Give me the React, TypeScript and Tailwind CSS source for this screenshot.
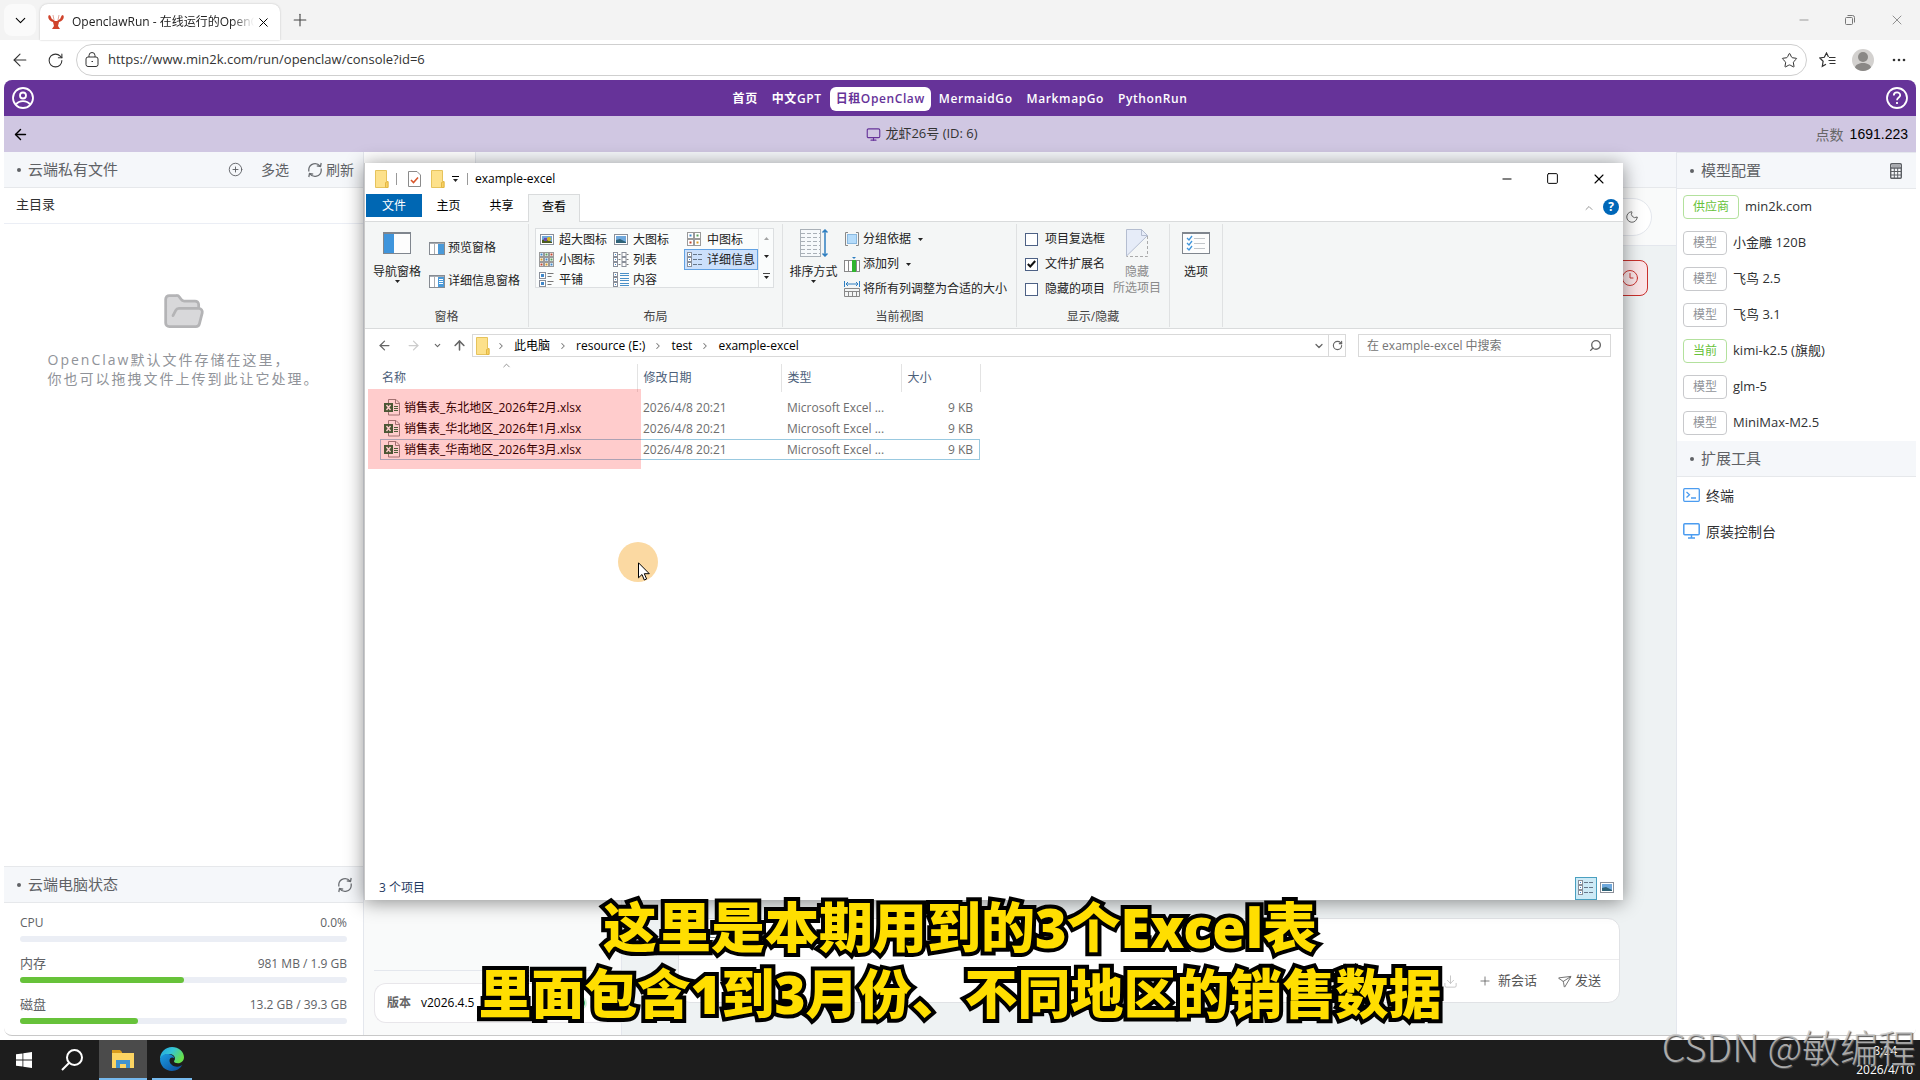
import type { ReactNode } from "react";
import {
  ArrowLeft,
  ArrowRight,
  ArrowUp,
  ChevronDown,
  ChevronRight,
  ChevronUp,
  CirclePlus,
  Clock3,
  Download,
  FolderOpen,
  Minus,
  Monitor,
  Moon,
  Plus,
  RotateCw,
  Search,
  Send,
  Square,
  Star,
  X,
} from "lucide-react";

const NAV = ["首页", "中文GPT", "日租OpenClaw", "MermaidGo", "MarkmapGo", "PythonRun"];

const MODELS = [
  { tag: "供应商", name: "min2k.com", active: true },
  { tag: "模型", name: "小金雕 120B", active: false },
  { tag: "模型", name: "飞鸟 2.5", active: false },
  { tag: "模型", name: "飞鸟 3.1", active: false },
  { tag: "当前", name: "kimi-k2.5 (旗舰)", active: true },
  { tag: "模型", name: "glm-5", active: false },
  { tag: "模型", name: "MiniMax-M2.5", active: false },
];

const STATS = [
  { label: "CPU", value: "0.0%", percent: 0 },
  { label: "内存", value: "981 MB / 1.9 GB", percent: 50 },
  { label: "磁盘", value: "13.2 GB / 39.3 GB", percent: 36 },
];

const FILES = [
  "销售表_东北地区_2026年2月.xlsx",
  "销售表_华北地区_2026年1月.xlsx",
  "销售表_华南地区_2026年3月.xlsx",
];

const CRUMBS = ["此电脑", "resource (E:)", "test", "example-excel"];

function Folder() {
  return (
    <svg width="14" height="18" viewBox="0 0 14 18" className="shrink-0">
      <path d="M.5.5h11v11h1.500v6H.5z" fill="#fde18b" stroke="#e6c35c" />
      <path d="M10.500 17.500v-5l2.500-1v6z" fill="#f9d262" stroke="#e3b744" />
    </svg>
  );
}

function Caret({ className = "" }: { className?: string }) {
  return (
    <svg width="5" height="3" viewBox="0 0 5 3" className={`shrink-0 ${className}`}>
      <path d="M0 0h5L2.500 3z" fill="#222" />
    </svg>
  );
}

function SyncIcon() {
  return (
    <svg width="16" height="16" viewBox="0 0 16 16" fill="none" stroke="#6b6e73" strokeWidth="1.300">
      <path d="M1.800 9.500V7A6.200 6.200 0 0 1 13 4.200M14.200 6.500V9A6.200 6.200 0 0 1 3 11.800" />
      <path d="M9.800 3.800l3.700.7.700-3.500M6.200 12.200l-3.700-.7-.7 3.500" />
    </svg>
  );
}

function CalculatorIcon() {
  return (
    <svg width="12" height="16" viewBox="0 0 12 16" fill="none" stroke="#5c5f64" className="mr-1.5">
      <rect x=".7" y=".7" width="10.600" height="14.600" rx="1" strokeWidth="1.400" />
      <path d="M1 5h10" strokeWidth="1.600" />
      <path d="M2 3h8M1 8.500h10M1 12h10M4.300 5v10M7.700 5v10" />
    </svg>
  );
}

function ExcelIcon() {
  return (
    <svg width="16" height="17" viewBox="0 0 16 17" className="shrink-0">
      <path d="M4.500.5h7.500l3.500 3.500v12h-11z" fill="#fff" stroke="#8c8c8c" />
      <path d="M11.500.5V4.500h4" fill="none" stroke="#8c8c8c" />
      <path d="M10 7.500h4M10 9.500h4M10 11.500h4" stroke="#217346" />
      <rect y="4" width="9" height="9" fill="#1e6b41" />
      <path d="M2.500 6l4 5M6.500 6l-4 5" stroke="#fff" strokeWidth="1.400" />
    </svg>
  );
}

function PictureIcon({ sun = false }: { sun?: boolean }) {
  return (
    <svg width="16" height="16" viewBox="0 0 16 16" className="shrink-0">
      <rect x="1.500" y="2.500" width="13" height="10" fill="#fff" stroke="#8a8f99" />
      <rect x="3" y="4" width="10" height="7" fill="#6fa8dc" />
      <path d="M3 8l4-1 6 3v1H3z" fill={sun ? "#4b5b1e" : "#2e6277"} />
      {sun && <circle cx="10" cy="7" r="2" fill="#d8b521" />}
      {sun && <rect x="5" y="6" width="3" height="3" fill="#6a4bb0" />}
    </svg>
  );
}

function TileIcon({ cols, step }: { cols: number; step: number }) {
  const cells = Array.from({ length: cols * cols }, (_, i) => i);
  const colors = ["#3f87c9", "#58a05c", "#c2452d", "#d79a26"];
  return (
    <svg width="16" height="16" viewBox="0 0 16 16" className="shrink-0">
      {cells.map((i) => {
        const x = (i % cols) * step + 0.5;
        const y = Math.floor(i / cols) * step + 0.5;
        return (
          <g key={i}>
            <rect x={x} y={y} width={step - 1} height={step - 1} fill="#fff" stroke="#9a9a9a" />
            <rect x={x + step / 2 - 1.5} y={y + step / 2 - 1.5} width="2" height="2" fill={colors[i % 4]} />
          </g>
        );
      })}
    </svg>
  );
}

function RowsIcon({ variant }: { variant: "list" | "details" | "tiles" | "content" }) {
  const rows = variant === "tiles" ? [1, 9] : [1, 6, 11];
  const size = variant === "tiles" ? 6 : 4;
  return (
    <svg width="16" height="16" viewBox="0 0 16 16" className="shrink-0">
      {rows.map((y) => (
        <g key={y}>
          <rect x=".5" y={y - 0.5} width={size} height={size} fill="#fff" stroke="#8a8f99" />
          <rect x="2" y={y + 1} width={size - 3} height={size - 3} fill="#3f87c9" />
          {variant === "list" && <path d={`M5.500 ${y + 1.5}h2M13.500 ${y + 1.5}h2`} stroke="#777" />}
          {variant === "list" && <rect x="9" y={y - 0.5} width="4" height="4" fill="#fff" stroke="#8a8f99" />}
          {variant === "details" && <path d={`M6 ${y + 1.5}h4M11 ${y + 1.5}h4`} stroke="#67778a" />}
          {variant === "tiles" && <path d={`M8.500 ${y + 0.5}h6M8.500 ${y + 3.5}h4`} stroke="#777" />}
          {variant === "content" && <path d={`M7 ${y + 0.5}h9M7 ${y + 2.5}h9`} stroke="#4a90c8" />}
        </g>
      ))}
    </svg>
  );
}

function PaneIcon({ side }: { side: "preview" | "details" }) {
  return (
    <svg width="16" height="13" viewBox="0 0 16 13" className="shrink-0">
      <rect x=".5" y=".5" width="15" height="12" fill="#fff" stroke="#868b92" />
      <path d="M1 1.500h14M5.500 2v10" stroke="#a8adb3" />
      <rect x="9" y="2" width="6" height="10" fill="#4a9ad9" />
      {side === "details" && <path d="M10 4.500h4M10 6.500h4M10 8.500h4" stroke="#fff" />}
    </svg>
  );
}

function EdgeIcon() {
  return (
    <svg width="24" height="24" viewBox="0 0 24 24">
      <defs>
        <linearGradient id="edgeTop" x1="0" y1="0" x2="1" y2="0.500">
          <stop offset="0" stopColor="#1fa2e0" />
          <stop offset=".5" stopColor="#35c5d6" />
          <stop offset="1" stopColor="#66e04a" />
        </linearGradient>
        <linearGradient id="edgeBottom" x1="0" y1="0" x2="1" y2="1">
          <stop offset="0" stopColor="#1b9de2" />
          <stop offset="1" stopColor="#0c4a9a" />
        </linearGradient>
      </defs>
      <path d="M0 12C0 5 5.500 0 12 0s12 4.700 12 10.200c0 3.600-2.800 6-6 6-2.600 0-4-1-4-2 0-.7 1-1 1-2.700C15 9 12.500 7 9 7c-4 0-7.500 2-9 5z" fill="url(#edgeTop)" />
      <path d="M0 12c1-3.500 4.800-5.500 8.500-5 3 .4 5.500 2 6 4.500-1-1.500-5-2-5 2 0 3.500 4 6.500 8 6.200 2-.2 3.500-.9 4.800-1.700C20 21.800 16.500 24 12 24 5.500 24 0 19 0 12z" fill="url(#edgeBottom)" />
    </svg>
  );
}

function BrowserChrome() {
  return (
    <header className="shrink-0">
      <div className="flex h-10 items-end bg-[#f3f3f3] pl-1">
        <button aria-label="标签页操作" className="mb-1 flex size-8 items-center justify-center rounded-lg bg-[#fafafa]">
          <ChevronDown size={17} strokeWidth={1.5} />
        </button>
        <div className="ml-1 flex h-9 w-60 items-center rounded-t-lg bg-white pl-2 shadow-[0_0_2px_#bbb]">
          <svg width="16" height="16" viewBox="0 0 16 16" className="shrink-0" fill="#d0432b">
            <path d="M1 1c2 0 2 3 3 4l3 2h2l3-2c1-1 1-4 3-4 2 2 0 6-4 7l-1 4 2 3H4l2-3-1-4C1 7-1 3 1 1z" />
            <path d="M6 6L5 1M10 6l1-5" stroke="#e2a79b" fill="none" />
          </svg>
          <span className="ml-2 w-[182px] overflow-hidden whitespace-nowrap text-[12px] text-[#222] [mask-image:linear-gradient(to_right,black_88%,transparent)]">
            OpenclawRun - 在线运行的OpenClaw
          </span>
          <button aria-label="关闭标签页" className="ml-0.5">
            <X size={15} strokeWidth={1.6} />
          </button>
        </div>
        <button aria-label="新建标签页" className="ml-2.5 flex h-10 items-center text-[#444]">
          <Plus size={20} strokeWidth={1.3} />
        </button>
        <div className="ml-auto flex h-10 items-center gap-8 pr-[15px] text-[#777]">
          <Minus size={14} strokeWidth={1.2} />
          <svg width="14" height="14" viewBox="0 0 14 14" fill="none" stroke="currentColor">
            <rect x="2.500" y="4.500" width="7" height="7" rx="1" />
            <path d="M4.500 2.500h5a2 2 0 0 1 2 2v5" />
          </svg>
          <X size={16} strokeWidth={1.2} />
        </div>
      </div>
      <div className="flex h-10 items-center bg-white pr-3.5 pl-2.5 text-[#333]">
        <button aria-label="后退"><ArrowLeft size={20} strokeWidth={1.3} /></button>
        <button aria-label="刷新" className="ml-[17px]"><RotateCw size={17} strokeWidth={1.5} /></button>
        <div className="ml-3 flex h-8 flex-1 items-center rounded-full border border-[#cfcfcf] px-2">
          <svg width="14" height="16" viewBox="0 0 14 16" fill="none" stroke="#333" className="shrink-0">
            <rect x="1" y="5" width="12" height="9.500" rx="2" />
            <path d="M4 5V3.500a3 3 0 0 1 6 0V5M6.500 9.500h1.500" />
          </svg>
          <input
            aria-label="地址栏"
            className="ml-[9px] min-w-0 flex-1 text-[13px] outline-none"
            defaultValue="https://www.min2k.com/run/openclaw/console?id=6"
          />
          <Star size={17} strokeWidth={1.4} />
        </div>
        <svg width="17" height="16" viewBox="0 0 17 16" fill="none" stroke="#333" strokeWidth="1.200" className="ml-3">
          <path d="M9.500 5L7.500 1 5.300 5.300.8 6l3.300 3.300-.8 5L7 12.300M10 5.500h6.500M9.500 8.500h7M10.500 11.500h6" />
        </svg>
        <svg width="22" height="22" viewBox="0 0 22 22" className="ml-4">
          <circle cx="11" cy="11" r="11" fill="#d3d1cf" />
          <circle cx="11" cy="8" r="5" fill="#8a8886" />
          <path d="M3 18.500c1-6 15-6 16 0a11 11 0 0 1-16 0z" fill="#8a8886" />
        </svg>
        <svg width="14" height="4" viewBox="0 0 14 4" className="ml-[18px]" fill="#333">
          <circle cx="2" cy="2" r="1.300" /><circle cx="7" cy="2" r="1.300" /><circle cx="12" cy="2" r="1.300" />
        </svg>
      </div>
    </header>
  );
}

function TopBars() {
  return (
    <>
      <div className="flex h-9 shrink-0 items-center justify-between bg-[#663399] px-2">
        <svg width="22" height="22" viewBox="0 0 22 22" fill="none" stroke="#fff" strokeWidth="1.800">
          <circle cx="11" cy="11" r="10" /><circle cx="11" cy="8.500" r="3" />
          <path d="M4 17.500c3-4.500 11-4.500 14 0" />
        </svg>
        <nav className="flex items-center gap-0.5 pt-px text-[12px] font-semibold tracking-wider text-white">
          {NAV.map((item) => (
            <a
              key={item}
              href="#"
              className={
                item === "日租OpenClaw"
                  ? "rounded-md bg-white px-1.5 py-0.5 leading-5 text-[#663399]"
                  : "px-1.5 leading-5"
              }
            >
              {item}
            </a>
          ))}
        </nav>
        <svg width="22" height="22" viewBox="0 0 22 22" fill="none" stroke="#fff" strokeWidth="1.800">
          <circle cx="11" cy="11" r="10" />
          <path d="M7.800 8.500c0-4 6.400-4 6.400-.3 0 2.300-3.200 2.300-3.200 5M11 15v2" />
        </svg>
      </div>
      <div className="grid h-9 shrink-0 grid-cols-3 items-center bg-[#d0c7e2] px-2 text-[13px]">
        <button aria-label="返回" className="w-5"><ArrowLeft size={17} /></button>
        <div className="flex items-center justify-center gap-1 pr-[76px] text-[#333]">
          <Monitor size={15} color="#663399" strokeWidth={1.8} />
          龙虾26号 (ID: 6)
        </div>
        <div className="flex justify-end gap-1.5 text-[14px] text-[#666]">
          点数<span className="font-['Liberation_Sans'] text-black">1691.223</span>
        </div>
      </div>
    </>
  );
}

function PanelTitle({ children, extra }: { children: ReactNode; extra?: ReactNode }) {
  return (
    <div className="flex h-9 shrink-0 items-center border-b border-[#e6e8eb] bg-[#f5f7fa] pl-3 pr-2 text-[15px] text-[#606266]">
      <span className="mr-[7px] ml-px size-1 rounded-full bg-[#606266]" />
      <h2 className="flex-1">{children}</h2>
      {extra}
    </div>
  );
}

function LeftPanel() {
  return (
    <aside className="flex w-[360px] shrink-0 flex-col border-r border-[#e4e7ed]">
      <PanelTitle
        extra={
          <div className="flex items-center text-[14px]">
            <button aria-label="新建" className="mr-[18px]"><CirclePlus size={15} strokeWidth={1.5} /></button>
            <button className="mr-[18px]">多选</button>
            <button className="mr-px flex items-center gap-[3px]"><SyncIcon />刷新</button>
          </div>
        }
      >
        云端私有文件
      </PanelTitle>
      <div className="flex h-9 items-center border-b border-[#ebeef5] px-3 pb-0.5 text-[13px] text-[#303133]">主目录</div>
      <div className="flex flex-1 flex-col items-center pt-[66px]">
        <FolderOpen size={44} strokeWidth={1.5} color="#b4b4b6" fill="#d8d8da" />
        <p className="mt-4 px-[42px] text-[14px] leading-[19px] tracking-[2px] text-[#909399]">
          OpenClaw默认文件存储在这里，
          <br />
          <span className="whitespace-nowrap">你也可以拖拽文件上传到此让它处理。</span>
        </p>
      </div>
      <div className="border-t border-[#e6e8eb]">
        <PanelTitle extra={<button aria-label="刷新状态" className="mr-0.5"><SyncIcon /></button>}>云端电脑状态</PanelTitle>
        <div className="flex h-[132px] flex-col gap-3 px-4 pt-2.5">
          {STATS.map((s) => (
            <div key={s.label}>
              <div className="flex h-5 items-center justify-between text-[12px] text-[#606266]">
                <span className={s.label === "CPU" ? "" : "text-[13px]"}>{s.label}</span>
                <span>{s.value}</span>
              </div>
              <div className="mt-[3px] h-[6px] rounded-full bg-[#ebeef5]">
                <div className="h-full rounded-full bg-[#67c23a]" style={{ width: `${s.percent}%` }} />
              </div>
            </div>
          ))}
        </div>
      </div>
    </aside>
  );
}

function ChatArea() {
  return (
    <main className="flex min-w-0 flex-1 flex-col bg-[#eef2f3]">
      <div className="flex h-9 shrink-0 border-b border-[#e6e8eb] bg-[#f5f7fa]">
        <div className="w-28 border-r border-b-2 border-[#e4e7ed] border-b-[#409eff] bg-white" />
      </div>
      <div className="flex min-h-0 flex-1">
        <section className="flex w-[258px] shrink-0 flex-col justify-end border-r border-[#e4e7ed] bg-[#f9fafa] pb-3 pl-2.5">
          <div className="border-t border-[#e4e7ed] pt-3">
            <div className="flex h-10 items-center rounded-l-xl border border-r-0 border-[#e8e6ea] bg-white px-3 text-[12px]">
              <b className="mr-2.5 text-[#666]">版本</b>v2026.4.5
              <span className="ml-auto mr-6 size-2.5 rounded-full bg-[#2eac66] ring-2 ring-[#cfeeda]" />
            </div>
          </div>
        </section>
        <section className="flex min-w-0 flex-1 flex-col">
          <div className="flex h-[58px] shrink-0 items-center justify-end border-b border-[#e4e7ed] bg-[#f9fafa] pr-6">
            <button aria-label="深色模式" className="flex h-[38px] w-24 items-center justify-end rounded-full border border-[#e4e7ed] bg-white pr-3 text-[#555]">
              <Moon size={14} strokeWidth={1.5} />
            </button>
          </div>
          <div className="flex justify-end pt-3.5 pr-7">
            <button aria-label="历史" className="flex h-9 w-16 items-center justify-end rounded-lg border border-[#c9302c] bg-[#fbe5e7] pr-2 text-[#c9302c]">
              <Clock3 size={18} strokeWidth={1.3} />
            </button>
          </div>
          <div className="mt-auto mr-14 mb-8 ml-14 rounded-xl border border-[#e0e2e5] bg-white text-[13px] text-[#555]">
            <div className="flex h-[41px] items-center border-b border-[#ececee] px-6">
              <input aria-label="消息" placeholder="告诉龙虾输入任务等" className="w-full outline-none placeholder:text-[#888]" />
            </div>
            <div className="flex h-[42px] items-center justify-end gap-5 pr-[18px]">
              <Download size={15} color="#bbb" strokeWidth={1.3} />
              <button className="flex items-center gap-1.5"><Plus size={14} strokeWidth={1.3} />新会话</button>
              <button className="flex items-center gap-1"><Send size={14} strokeWidth={1.3} className="rotate-12" />发送</button>
            </div>
          </div>
        </section>
      </div>
    </main>
  );
}

function RightPanel() {
  return (
    <aside className="w-60 shrink-0 border-t border-l border-[#e4e7ed] bg-white text-[14px] text-[#303133]">
      <PanelTitle extra={<CalculatorIcon />}>模型配置</PanelTitle>
      <ul>
        {MODELS.map((m) => (
          <li key={m.name} className="flex h-9 items-center gap-1.5 pl-1.5 text-[13px]">
            <span
              className={`rounded border px-[9px] text-[12px] leading-[22px] ${
                m.active ? "border-[#b3e19d] text-[#67c23a]" : "border-[#c8c9cc] text-[#909399]"
              }`}
            >
              {m.tag}
            </span>
            {m.name}
          </li>
        ))}
      </ul>
      <PanelTitle>扩展工具</PanelTitle>
      <a href="#" className="flex h-9 items-center gap-1.5 pl-1.5">
        <svg width="17" height="14" viewBox="0 0 17 14" fill="none" stroke="#4b9cf0" strokeWidth="1.300">
          <rect x=".7" y=".7" width="15.600" height="12.600" rx="1" />
          <path d="M3.500 4l3 2.800-3 2.800M8 10h5" />
        </svg>
        终端
      </a>
      <a href="#" className="flex h-9 items-center gap-1.5 pl-1.5">
        <svg width="17" height="16" viewBox="0 0 17 16" fill="none" stroke="#4b9cf0" strokeWidth="1.500">
          <rect x=".8" y=".8" width="15.400" height="11" rx="1" />
          <path d="M5 15h7M8.500 12v3" />
        </svg>
        原装控制台
      </a>
    </aside>
  );
}

function RibbonGroup({ label, className, children }: { label?: string; className: string; children: ReactNode }) {
  return (
    <div className={`flex h-[103px] shrink-0 flex-col border-r border-[#dfe1e2] ${className}`}>
      <div className="flex h-[84px]">{children}</div>
      <div className="text-center text-[12px] leading-[18px] text-[#444]">{label}</div>
    </div>
  );
}

function GalleryItem({ icon, label, selected }: { icon: ReactNode; label: string; selected?: boolean }) {
  return (
    <button
      className={`flex h-[21px] items-center gap-1 overflow-hidden whitespace-nowrap border pl-0.5 ${
        selected ? "border-[#62a2e4] bg-[#cce0fb]" : "border-transparent"
      }`}
    >
      {icon}
      {label}
    </button>
  );
}

function Ribbon() {
  return (
    <div className="flex h-[108px] shrink-0 border-y border-[#d9dbdc] bg-[#f4f6f6] pt-0.5 text-[12px] leading-4 text-[#222]">
      <RibbonGroup label="窗格" className="w-[164px]">
        <button className="flex w-16 flex-col items-center pt-2">
          <svg width="28" height="22" viewBox="0 0 28 22">
            <rect x=".5" y=".5" width="27" height="21" fill="#fdfdfd" stroke="#80868e" />
            <path d="M0 1.500h28" stroke="#80868e" />
            <rect x="1" y="2" width="10" height="19" fill="#3f95dc" />
          </svg>
          <span className="mt-2.5">导航窗格</span>
          <Caret />
        </button>
        <div className="flex flex-col gap-[17px] pt-4 whitespace-nowrap">
          <button className="flex items-center gap-[3px]"><PaneIcon side="preview" />预览窗格</button>
          <button className="flex items-center gap-[3px]"><PaneIcon side="details" />详细信息窗格</button>
        </div>
      </RibbonGroup>
      <RibbonGroup label="布局" className="w-[254px]">
        <div className="mt-1 ml-1.5 flex h-[60px] w-[239px] border border-[#dcdfe1] bg-[#fafcfc]">
          <div className="grid flex-1 grid-cols-[74px_74px_74px] grid-rows-[20px_20px_20px] overflow-hidden">
            <GalleryItem icon={<PictureIcon sun />} label="超大图标" />
            <GalleryItem icon={<PictureIcon />} label="大图标" />
            <GalleryItem icon={<TileIcon cols={2} step={7} />} label="中图标" />
            <GalleryItem icon={<TileIcon cols={3} step={5} />} label="小图标" />
            <GalleryItem icon={<RowsIcon variant="list" />} label="列表" />
            <GalleryItem icon={<RowsIcon variant="details" />} label="详细信息" selected />
            <GalleryItem icon={<RowsIcon variant="tiles" />} label="平铺" />
            <GalleryItem icon={<RowsIcon variant="content" />} label="内容" />
          </div>
          <div className="flex w-[15px] flex-col items-center justify-between border-l border-[#e4e6e7] py-2">
            <Caret className="rotate-180 opacity-40" />
            <Caret />
            <span className="flex flex-col items-center gap-0.5"><i className="h-px w-[7px] bg-[#444]" /><Caret /></span>
          </div>
        </div>
      </RibbonGroup>
      <RibbonGroup label="当前视图" className="w-[234px]">
        <button className="flex w-[61px] flex-col items-center pt-[5px]">
          <svg width="28" height="28" viewBox="0 0 28 28">
            <rect x=".5" y=".5" width="20" height="27" fill="#f6f9fb" stroke="#a9b0b7" />
            <path d="M1 4.500h19M1 8.500h19M1 12.500h19M1 16.500h19M1 20.500h19M1 24.500h19" stroke="#a9b0b7" strokeDasharray="4 2" />
            <path d="M25 1v26M22.500 3.500L25 1l2.500 2.500M22.500 24.500L25 27l2.500-2.500" fill="none" stroke="#2f7fc1" strokeWidth="1.500" />
          </svg>
          <span className="mt-[7px]">排序方式</span>
          <Caret />
        </button>
        <div className="flex flex-col gap-[9px] pt-[7px] whitespace-nowrap">
          <button className="flex items-center gap-[3px]">
            <svg width="16" height="16" viewBox="0 0 16 16" fill="none">
              <rect x="3.500" y="3.500" width="9" height="9" fill="#b5dcfb" stroke="#8ab9e0" />
              <path d="M4 1.500H1.500v13H4M12 1.500h2.500v13H12" stroke="#888" />
            </svg>
            分组依据<Caret className="ml-1" />
          </button>
          <button className="flex items-center gap-[3px]">
            <svg width="16" height="16" viewBox="0 0 16 16" fill="none">
              <rect x=".5" y="4.500" width="15" height="11" fill="#fff" stroke="#888" />
              <path d="M4.500 4.500v11M12.500 4.500v11" stroke="#888" />
              <rect x="8" y="4" width="4" height="12" fill="#2fb52f" />
              <path d="M8 1h4l-2 2z" fill="#2f7fc1" />
            </svg>
            添加列<Caret className="ml-1" />
          </button>
          <button className="flex items-center gap-[3px]">
            <svg width="16" height="16" viewBox="0 0 16 16" fill="none">
              <path d="M.5 0v6M15.500 0v6M2 3h12M4 1L2 3l2 2M12 1l2 2-2 2" stroke="#2f7fc1" />
              <path d="M.5 7.500h15v8H.5zM.5 10.500h15M4.500 10v5M8.500 10v5M12.500 10v5" stroke="#888" />
            </svg>
            将所有列调整为合适的大小
          </button>
        </div>
      </RibbonGroup>
      <RibbonGroup label="显示/隐藏" className="w-[153px]">
        <div className="flex flex-col gap-[9px] pt-[7px] pl-2">
          {["项目复选框", "文件扩展名", "隐藏的项目"].map((label) => (
            <label key={label} className="flex items-center gap-[7px] whitespace-nowrap">
              <input
                type="checkbox"
                defaultChecked={label === "文件扩展名"}
                className="peer size-[13px] appearance-none border border-[#4d6185] bg-white"
              />
              <svg width="9" height="8" viewBox="0 0 9 8" className="mr-[2px] -ml-[18px] opacity-0 peer-checked:opacity-100" fill="none" stroke="#111" strokeWidth="2">
                <path d="M.8 4l2.500 2.500L8.200 1" />
              </svg>
              {label}
            </label>
          ))}
        </div>
        <button disabled className="ml-1 flex w-14 flex-col items-center pt-[5px] text-[#8a8a8a]">
          <svg width="22" height="28" viewBox="0 0 22 28" fill="none">
            <path d="M.5 27V.5h15l6 6z" fill="#e6ecf8" stroke="#b4bdd0" />
            <path d="M15.500.5v6h6" stroke="#b4bdd0" />
            <path d="M21.500 7v20.500H.5" stroke="#aaa" strokeDasharray="3 2" />
          </svg>
          <span className="mt-[7px]">隐藏</span>
          <span>所选项目</span>
        </button>
      </RibbonGroup>
      <RibbonGroup className="w-[53px]">
        <button className="flex w-full flex-col items-center pt-2">
          <svg width="28" height="22" viewBox="0 0 28 22" fill="none">
            <rect x=".5" y=".5" width="27" height="21" fill="#fdfdfd" stroke="#80868e" />
            <path d="M0 1.500h28" stroke="#80868e" />
            <path d="M12 6.500h11M12 11.500h11M12 16.500h11" stroke="#c2c6ca" />
            <path d="M5 6l2 2 3-4M5 11l2 2 3-4M5 16l2 2 3-4" stroke="#3f95dc" strokeWidth="1.300" />
          </svg>
          <span className="mt-2.5">选项</span>
        </button>
      </RibbonGroup>
    </div>
  );
}

function FileTable() {
  const head = "border-r border-[#e3e3e3] pl-1.5 text-left font-normal";
  return (
    <div className="relative mt-[7px] ml-[15px]">
      <table className="w-[600px] table-fixed border-collapse text-[12px] text-[#6d6d6d]">
        <colgroup>
          <col className="w-[257px]" />
          <col className="w-[144px]" />
          <col className="w-[120px]" />
          <col className="w-[79px]" />
        </colgroup>
        <thead className="text-[#4c607a]">
          <tr className="h-7">
            <th className="border-r border-[#e3e3e3] pl-0.5 text-left font-normal">名称</th>
            <th className={head}>修改日期</th>
            <th className={head}>类型</th>
            <th className={head}>大小</th>
          </tr>
        </thead>
        <tbody>
          <tr className="h-[5px]"><td colSpan={4} /></tr>
          {FILES.map((name) => (
            <tr key={name} className="h-[21px] last:outline last:-outline-offset-1 last:outline-[#99c9e0]">
              <td className="pl-1">
                <span className="flex items-center gap-1 whitespace-nowrap text-black"><ExcelIcon />{name}</span>
              </td>
              <td className="pl-1.5">2026/4/8 20:21</td>
              <td className="pl-1.5 whitespace-nowrap">Microsoft Excel ...</td>
              <td className="pr-[7px] text-right">9 KB</td>
            </tr>
          ))}
        </tbody>
      </table>
      <ChevronUp size={11} strokeWidth={1.5} className="absolute -top-1 left-[121px] text-[#666]" />
      {/* highlighter mark over the name column */}
      <div className="absolute top-[25px] -left-3 h-20 w-[273px] bg-[#ff0000]/20" />
    </div>
  );
}

function ExplorerWindow() {
  return (
    <div className="absolute top-[163px] right-[297px] bottom-[180px] left-[364px] flex flex-col border-l border-[#c8c8c8] bg-white text-[12px] text-black shadow-[0_2px_18px_rgba(0,0,0,0.45)]">
      <div className="flex h-[31px] shrink-0 items-center pl-2.5">
        <Folder />
        <span className="mx-[7px] h-3 w-px bg-[#999]" />
        <svg width="13" height="16" viewBox="0 0 13 16" className="ml-1 mr-2.5">
          <path d="M.5.5h8.500l3.500 3.500v11.500H.5z" fill="#fff" stroke="#8b8b8b" />
          <path d="M3 9l2.500 2.500L10 6.500" fill="none" stroke="#d8562b" strokeWidth="1.600" />
        </svg>
        <Folder />
        <span className="ml-[7px] flex flex-col items-center gap-0.5"><i className="h-px w-[7px] bg-black" /><Caret /></span>
        <span className="mr-[7px] ml-2 h-3 w-px bg-[#999]" />
        <span className="flex-1">example-excel</span>
        <button aria-label="最小化" className="mr-8"><Minus size={14} strokeWidth={1.7} /></button>
        <button aria-label="最大化" className="mr-8"><Square size={13} strokeWidth={1.8} /></button>
        <button aria-label="关闭" className="mr-4"><X size={16} strokeWidth={1.6} /></button>
      </div>
      <div className="flex h-[27px] shrink-0 items-start">
        <button className="ml-px h-[23px] w-14 bg-[#0067b3] text-white">文件</button>
        <button className="h-[23px] w-[53px]">主页</button>
        <button className="h-[23px] w-[53px]">共享</button>
        <button className="z-10 h-7 w-[52px] border border-b-0 border-[#d9dbdc] bg-[#f4f6f6] pb-1">查看</button>
        <ChevronUp size={12} className="mt-2 ml-auto text-[#999]" />
        <span className="mt-[5px] mr-1 ml-2 flex size-4 items-center justify-center rounded-full bg-[#0067b8] text-[12px] font-bold text-white">?</span>
      </div>
      <Ribbon />
      <div className="mt-[5px] flex h-[23px] shrink-0 items-center pr-3 pl-3 text-[#666]">
        <ArrowLeft size={15} />
        <ArrowRight size={15} className="ml-3.5 text-[#ccc]" />
        <ChevronDown size={9} strokeWidth={3} className="ml-3" />
        <ArrowUp size={15} strokeWidth={2.5} className="ml-2.5" />
        <div className="ml-[5px] flex h-full flex-1 items-center border border-[#d9d9d9] pl-[3px] text-black">
          <Folder />
          {CRUMBS.map((c) => (
            <span key={c} className="flex items-center first-of-type:-ml-0.5">
              <ChevronRight size={10} strokeWidth={2.5} className="mx-2 text-[#777]" />
              {c}
            </span>
          ))}
          <ChevronDown size={12} strokeWidth={2.5} className="mr-[3px] ml-auto text-[#666]" />
          <span className="flex h-full w-[17px] items-center justify-center border-l border-[#d9d9d9]">
            <RotateCw size={11} strokeWidth={2.5} color="#666" />
          </span>
        </div>
        <label className="ml-3 flex h-full w-[253px] items-center border border-[#d9d9d9] px-2">
          <input aria-label="搜索" placeholder="在 example-excel 中搜索" className="min-w-0 flex-1 outline-none placeholder:text-[#757575]" />
          <Search size={13} strokeWidth={2.5} className="-scale-x-100" />
        </label>
      </div>
      <FileTable />
      <div className="mt-auto flex h-6 items-center pr-2 pl-3.5 text-[#1f3a5f]">
        3 个项目
        <span className="ml-auto flex h-[23px] w-[22px] items-center justify-center border border-[#4aa0c0] bg-[#cdeaf6]">
          <RowsIcon variant="details" />
        </span>
        <span className="ml-0.5"><PictureIcon /></span>
      </div>
    </div>
  );
}

function Taskbar() {
  return (
    <footer className="flex h-10 shrink-0 items-center bg-[#1d1d1d]">
      <button aria-label="开始" className="ml-4">
        <svg width="16" height="16" viewBox="0 0 16 16" fill="#fff">
          <path d="M0 2.300l6.500-.9v6.200H0zM7.300 1.200L16 0v7.600H7.300zM0 8.400h6.500v6.200L0 13.700zM7.300 8.400H16V16l-8.700-1.200z" />
        </svg>
      </button>
      <button aria-label="搜索" className="ml-[29px]">
        <svg width="22" height="22" viewBox="0 0 22 22" fill="none" stroke="#fff" strokeWidth="2">
          <circle cx="13.500" cy="8.500" r="7.500" /><path d="M8 14L1 21" />
        </svg>
      </button>
      <button aria-label="文件资源管理器" className="ml-4 flex h-10 w-12 items-center justify-center border-b-2 border-[#76b9ed] bg-[#4b4b4b]">
        <svg width="22" height="18" viewBox="0 0 22 18">
          <path d="M0 0h8l2 2v4H0z" fill="#d99c1d" />
          <path d="M0 3h22v15H0z" fill="#fcd462" />
          <path d="M4 18v-8h14v8h-4v-4H8v4z" fill="#4193cf" />
        </svg>
      </button>
      <button aria-label="Edge" className="ml-[5px] flex h-10 w-10 items-center justify-center border-b-2 border-[#76b9ed]">
        <EdgeIcon />
      </button>
      <div className="mr-[7px] ml-auto flex flex-col items-end text-[12px] leading-[19px] text-white">
        <span className="mr-4">8:24</span>
        <span>2026/4/10</span>
      </div>
    </footer>
  );
}

export default function App() {
  return (
    <div className="relative flex h-screen flex-col overflow-hidden bg-white font-['Open_Sans','Noto_Sans_CJK_SC',sans-serif]">
      <BrowserChrome />
      <div className="mx-1 mb-1 flex min-h-0 flex-1 flex-col overflow-hidden rounded-lg border-b border-[#c8c8c8] bg-white">
        <TopBars />
        <div className="flex min-h-0 flex-1">
          <LeftPanel />
          <ChatArea />
          <RightPanel />
        </div>
      </div>
      <Taskbar />
      <ExplorerWindow />

      {/* pointer with its click halo */}
      <div className="absolute top-[542px] left-[618px] size-10 rounded-full bg-[#fbd9a2]">
        <svg width="12" height="19" viewBox="0 0 12 19" className="mt-5 ml-5">
          <path d="M.5.8v15l3.500-3.300 2.300 5.500 2.300-1-2.300-5.300h5z" fill="#fff" stroke="#000" />
        </svg>
      </div>

      <p className="absolute inset-x-0 bottom-[53px] text-center font-['Noto_Sans','Noto_Sans_CJK_SC',sans-serif] text-[53px] leading-[66px] font-black text-[#ffde00] [-webkit-text-stroke:8px_black] [paint-order:stroke]">
        <span className="text-[54px]">这里是本期用到的3个Excel表</span>
        <br />
        里面包含1到3月份、不同地区的销售数据
      </p>
      <p className="absolute right-1 bottom-2.5 font-['Noto_Sans_CJK_SC',sans-serif] text-[38px] leading-[48px] font-light text-[#c8c8c8]/80 [text-shadow:1px_1px_1px_#555]">
        CSDN @敏编程
      </p>
    </div>
  );
}
